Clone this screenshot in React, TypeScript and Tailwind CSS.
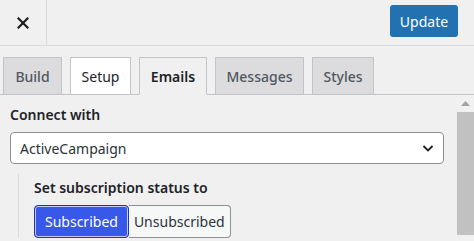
import { useState } from "react";

const tabs = [
  { label: "Build", w: "w-[59px]" },
  { label: "Setup", w: "w-[61px]" },
  { label: "Emails", w: "w-[68px]" },
  { label: "Messages", w: "w-[89px]" },
  { label: "Styles", w: "w-[62px]" },
];

export default function App() {
  const [status, setStatus] = useState("Subscribed");

  return (
    <div
      className="w-[474px] h-[241px] overflow-hidden bg-[#f0f0f1] text-[#1e1e1e] flex flex-col"
      style={{ fontFamily: '"Noto Sans", "Open Sans", sans-serif' }}
    >
      {/* Header */}
      <div className="h-[46px] shrink-0 flex items-stretch border-b border-[#dcdcde]">
        <button className="w-[47px] border-r border-[#dcdcde] flex items-center justify-center">
          <svg width="12" height="12" viewBox="0 0 12 12" className="text-[#1e1e1e]">
            <path d="M1.5 1.5 L10.5 10.5 M10.5 1.5 L1.5 10.5" stroke="currentColor" strokeWidth="2.2" strokeLinecap="square" />
          </svg>
        </button>
        <div className="flex-1 flex items-start justify-end pr-4 pt-[5px]">
          <button className="h-[32px] w-[68px] rounded-[3px] bg-[#2271b1] text-white text-[14px]">
            Update
          </button>
        </div>
      </div>

      {/* Tabs */}
      <div className="shrink-0 flex gap-2 px-[3px] pt-[11px] border-b border-[#c3c4c7]">
        {tabs.map((t) => {
          const active = t.label === "Emails";
          const hover = t.label === "Setup";
          return (
            <div
              key={t.label}
              className={
                t.w +
                " h-[38px] -mb-px flex items-center justify-center text-[14px] border border-[#c3c4c7] " +
                (active
                  ? "bg-[#f0f0f1] border-b-[#f0f0f1] text-[#1d2327] font-semibold"
                  : hover
                  ? "bg-white text-[#1d2327] border-b-[#c3c4c7]"
                  : "bg-[#dcdcde] text-[#50575e] font-medium")
              }
            >
              {t.label}
            </div>
          );
        })}
      </div>

      {/* Body */}
      <div className="flex-1 flex min-h-0">
        <div className="flex-1 pl-[10px] pr-[13px] pt-[9px]">
          <div className="text-[14px] font-semibold text-[#1d2327] leading-[22px]">Connect with</div>
          <div className="mt-[6px] h-[32px] bg-white border border-[#8c8f94] rounded-[4px] flex items-center justify-between pl-[9px] pr-[8px] text-[14px] text-[#2c3338]">
            <span>ActiveCampaign</span>
            <svg width="14" height="14" viewBox="0 0 14 14">
              <path d="M2.5 5 L7 9.5 L11.5 5" fill="none" stroke="#1e1e1e" strokeWidth="1.8" />
            </svg>
          </div>
          <div className="mt-[10px] ml-[8px] border-l border-[#dcdcde] pl-[15px] pt-[3px]">
            <div className="text-[14px] font-semibold text-[#1d2327] leading-[22px]">Set subscription status to</div>
            <div className="mt-[6px] flex">
              {["Subscribed", "Unsubscribed"].map((s) => {
                const on = s === status;
                return (
                  <button
                    key={s}
                    onClick={() => setStatus(s)}
                    className={
                      "h-[33px] text-[14px] " +
                      (on
                        ? "px-[10px] bg-[#3858e9] text-white rounded-[4px] border border-[#1d35b4] ring-1 ring-inset ring-white/70"
                        : "px-[5px] bg-[#f6f7f7] text-[#2c3338] border border-[#8c8f94] border-l-0 rounded-r-[4px]")
                    }
                  >
                    {s}
                  </button>
                );
              })}
            </div>
          </div>
        </div>

        {/* Scrollbar */}
        <div className="w-[17px] shrink-0 bg-[#f1f1f1] flex flex-col items-center pt-[6px] pb-[6px]">
          <svg width="9" height="5" viewBox="0 0 9 5">
            <path d="M0 5 L4.5 0 L9 5 Z" fill="#a3a3a3" />
          </svg>
          <div className="mt-[6px] w-full flex-1 bg-[#c1c1c1]" />
        </div>
      </div>
    </div>
  );
}
